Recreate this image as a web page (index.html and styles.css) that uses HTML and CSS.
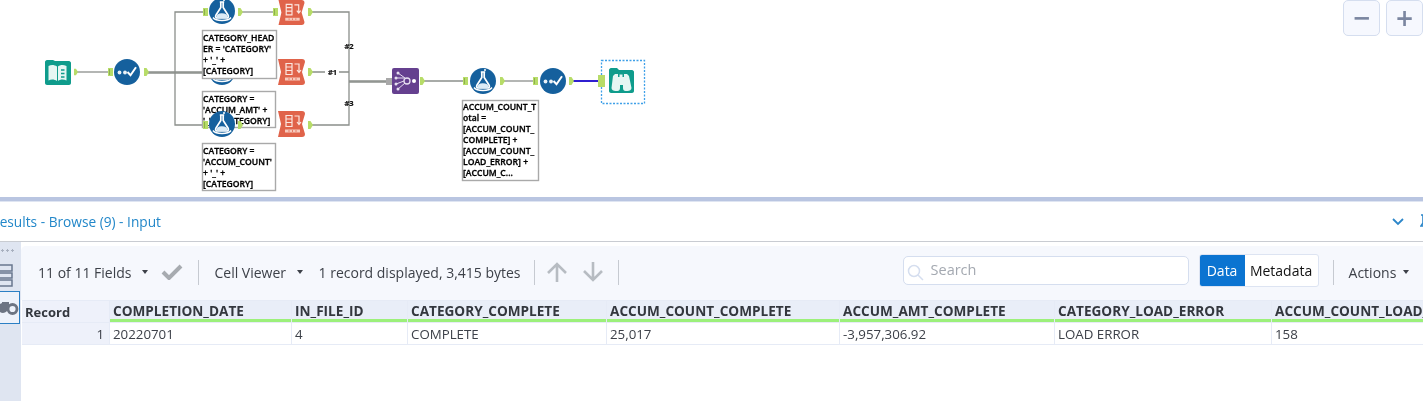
FILE: index.html
```html
<!DOCTYPE html>
<html lang="en">
<head>
<meta charset="utf-8">
<title>Results - Browse (9) - Input</title>
<link rel="stylesheet" href="styles.css">
</head>
<body>
<div class="app">
  <section class="canvas">
    <svg class="workflow" width="1423" height="197" viewBox="0 0 1423 197">
      <defs>
        <symbol id="flask" viewBox="0 0 26 26" overflow="visible">
          <circle cx="13" cy="13" r="13" fill="#15609d"/>
          <path d="M10.800 4h4.400M11.800 4.500v5L7 17c-1.100 1.800 0 3 1.800 3h8.400c1.800 0 2.900-1.200 1.800-3l-4.800-7.500v-5" fill="none" stroke="#fff" stroke-width="1.700"/>
          <path d="M8.400 16.500c2.500-1.600 6-1.600 9.200 0l1 2.200c-.2.800-.8 1.200-1.600 1.200H9c-.8 0-1.400-.4-1.600-1.200z" fill="#dcebf6"/>
          <path d="M4 19.500c3 4 15 4 18 0" fill="none" stroke="#fff" stroke-width="1.500"/>
          <circle cx="15" cy="2" r="1" fill="#fff"/>
        </symbol>
        <symbol id="select" viewBox="0 0 26 26" overflow="visible">
          <circle cx="13" cy="13" r="13" fill="#15609d"/>
          <circle cx="5.500" cy="13.500" r="1.900" fill="#eaf1f7"/>
          <circle cx="11" cy="13.500" r="1.900" fill="#eaf1f7"/>
          <path d="M13.500 13l3 3.200 5.500-8" fill="none" stroke="#fff" stroke-width="2"/>
        </symbol>
        <symbol id="split" viewBox="0 0 27 26">
          <path d="M0 0h24c2 0 3 1 3 3l-3 10 3 10c0 2-1 3-3 3H0l3-13z" fill="#e0634a"/>
          <path d="M8 4.500h6v11H8zM8 8h6M8 11.500h6" fill="none" stroke="#fbe6e0" stroke-width="1.200"/>
          <path d="M16.500 5h4.500v8M19 11l2 2.500 2-2.500" fill="none" stroke="#fbe6e0" stroke-width="1.200"/>
          <path d="M7 18.500h15v3H7z" fill="#f7cabd"/>
          <path d="M10.500 20h1M14 20h1M17.500 20h1" stroke="#e0634a" stroke-width="1.300"/>
        </symbol>
        <symbol id="anchor" viewBox="0 0 5 8">
          <path d="M0 0h2.500L5 4 2.500 8H0z" fill="#b7dc68"/>
        </symbol>
        <symbol id="inport" viewBox="0 0 5 8">
          <rect width="5" height="8" fill="#b7dc68"/>
          <rect x="1" y="1" width="1" height="6" fill="#8cb24c"/>
        </symbol>
      </defs>

      <g class="wire">
        <path d="M77 72H108"/>
        <path d="M148 72H203"/>
        <path d="M148 73H203"/>
        <path d="M203 12H175V125H203"/>
        <path d="M242 12H273"/>
        <path d="M312 12H349V125H312"/>
        <path d="M312 72H325M339 72H349"/>
        <path d="M349 81H390"/>
        <path d="M349 82H390"/>
        <path d="M424 81H463"/>
        <path d="M504 81H533"/>
      </g>
      <path class="wire-live" d="M573 81H600"/>

      <use href="#flask" x="209" y="59" width="26" height="26"/>

      <g class="book">
        <path d="M45 62c0-1 1-2 2-2h6l2 1h14c1 0 2 1 2 2v20c0 1-1 2-2 2H47c-1 0-2-1-2-2z" fill="#0f9c8c"/>
        <path d="M48.500 66c3-1.500 6-1 8.500 .5v14.500c-2.500-1.500-5.500-2-8.500-.5zM58 66.500c2-1.500 5-2 8.500-.5v14.500c-3.500-1.500-6.500-1-8.500 .5z" fill="#e6f6f3"/>
        <path d="M61 70h3.500M61 73.500h3.500M61 77h3.500" stroke="#0f9c8c" stroke-width="1.500"/>
      </g>
      <use href="#select" x="114" y="59" width="26" height="26"/>
      <use href="#flask" x="209" y="-2" width="26" height="26"/>
      <use href="#split" x="278" y="0" width="27" height="25"/>
      <use href="#split" x="278" y="59" width="27" height="26"/>
      <use href="#split" x="278" y="111" width="27" height="26"/>

      <g class="ports">
        <use href="#anchor" x="74" y="68" width="4" height="8"/>
        <use href="#inport" x="108" y="68" width="5" height="8"/>
        <use href="#anchor" x="144" y="68" width="5" height="8"/>
        <use href="#inport" x="203" y="8" width="5" height="8"/>
        <use href="#anchor" x="238" y="8" width="5" height="8"/>
        <use href="#inport" x="273" y="8" width="5" height="8"/>
        <use href="#anchor" x="308" y="8" width="5" height="8"/>
        <use href="#anchor" x="308" y="68" width="5" height="8"/>
        <use href="#anchor" x="308" y="121" width="5" height="8"/>
      </g>

      <g class="note">
        <rect class="note-box" x="202.500" y="30.500" width="74" height="48"/>
        <text x="203" y="41">CATEGORY_HEAD</text>
        <text x="203" y="52">ER = 'CATEGORY'</text>
        <text x="203" y="63">+ '_' +</text>
        <text x="203" y="74">[CATEGORY]</text>

        <rect class="note-box" x="202.500" y="91.500" width="73" height="36"/>
        <text x="203" y="102">CATEGORY =</text>
        <text x="203" y="113">'ACCUM_AMT' +</text>
        <text x="203" y="124">'_' + [CATEGORY]</text>
      </g>

      <use href="#flask" x="209" y="111" width="26" height="26"/>
      <use href="#inport" x="203" y="121" width="5" height="8"/>
      <use href="#anchor" x="238" y="121" width="5" height="8"/>

      <g class="note">
        <rect class="note-box" x="202.500" y="143.500" width="73" height="47"/>
        <text x="203" y="154">CATEGORY =</text>
        <text x="203" y="165">'ACCUM_COUNT'</text>
        <text x="203" y="176">+ '_' +</text>
        <text x="203" y="187">[CATEGORY]</text>

        <rect class="note-box" x="462.500" y="100.500" width="76" height="80"/>
        <text x="463" y="110">ACCUM_COUNT_T</text>
        <text x="463" y="121">otal =</text>
        <text x="463" y="132">[ACCUM_COUNT_</text>
        <text x="463" y="143">COMPLETE] +</text>
        <text x="463" y="154">[ACCUM_COUNT_</text>
        <text x="463" y="165">LOAD_ERROR] +</text>
        <text x="463" y="176">[ACCUM_C...</text>
      </g>

      <g class="conn-label">
        <text x="349" y="49">#2</text>
        <text x="328" y="75">#1</text>
        <text x="349" y="106">#3</text>
      </g>

      <g class="union">
        <rect x="392" y="68" width="27" height="26" rx="2" fill="#65408f"/>
        <circle cx="398" cy="73" r="1.500" fill="#e6def0"/>
        <circle cx="396" cy="78" r="1.500" fill="#e6def0"/>
        <circle cx="396" cy="84" r="1.500" fill="#e6def0"/>
        <circle cx="398" cy="89" r="1.500" fill="#e6def0"/>
        <path d="M398 73l7 5M396 78h8M396 84l8-3M398 89l7-6" stroke="#e6def0" fill="none"/>
        <circle cx="407" cy="81" r="3" fill="none" stroke="#e6def0" stroke-width="1.300"/>
        <circle cx="414" cy="81" r="2" fill="#fff"/>
      </g>
      <rect x="386" y="78" width="6" height="7" fill="#a9a9a9"/>
      <use href="#anchor" x="420" y="77" width="5" height="8"/>
      <use href="#flask" x="470" y="68" width="26" height="26"/>
      <use href="#inport" x="463" y="77" width="5" height="8"/>
      <use href="#anchor" x="500" y="77" width="5" height="8"/>
      <use href="#select" x="540" y="68" width="26" height="26"/>
      <use href="#inport" x="533" y="77" width="5" height="8"/>
      <use href="#anchor" x="569" y="77" width="5" height="8"/>

      <rect class="selection" x="601.500" y="60.500" width="43" height="43"/>
      <g class="browse">
        <path d="M609 70c0-1 1-2 2-2h6l2 2h13c1 0 2 1 2 2v19c0 1-1 2-2 2h-21c-1 0-2-1-2-2z" fill="#0f9c8c"/>
        <path d="M613 76l2-2h3v3h1.500v-2.500h3V77h1.500v-3h3l2 2 2.500 12c0 2-2 3-4 3h-2c-1.500 0-2.500-1-2.500-3v-3h-3v3c0 2-1 3-2.500 3h-2c-2 0-4-1-4-3z" fill="#e6f6f3"/>
      </g>
      <path d="M598 75h7v12h-7z" fill="#b7dc68"/>
    </svg>
    <div class="zoom">
      <button class="zoom-btn" type="button">&#8722;</button>
      <button class="zoom-btn" type="button">+</button>
    </div>
  </section>

  <div class="splitter"></div>

  <header class="title-bar">
    <span class="title">Results - Browse (9) - Input</span>
    <div class="title-icons">
      <svg width="14" height="10" viewBox="0 0 14 10"><path d="M2 2l5 5 5-5" fill="none" stroke="#2c86c9" stroke-width="1.800"/></svg>
      <svg class="pin" width="12" height="16" viewBox="0 0 12 16"><path d="M1 1h10M3 1v8L1 12h10L9 9V1M6 12v4" fill="none" stroke="#2c86c9" stroke-width="1.600"/></svg>
    </div>
  </header>

  <div class="results">
    <aside class="rail">
      <div class="grip"></div>
      <svg class="rail-list" width="13" height="24" viewBox="0 0 13 24">
        <path d="M-1 1h13v6H-1zM-1 9h13v5H-1zM-1 16h13v6H-1z" fill="none" stroke="#69778f" stroke-width="1.500"/>
      </svg>
      <div class="rail-active">
        <svg width="19" height="18" viewBox="0 0 19 18">
          <circle cx="3" cy="9" r="5" fill="#6d7482"/>
          <circle cx="12.500" cy="10" r="4.500" fill="none" stroke="#6d7482" stroke-width="2.800"/>
          <path d="M2 3h7v5H2z" fill="#6d7482"/>
        </svg>
      </div>
    </aside>

    <main class="panel">
      <div class="toolbar">
        <span class="tool-text">11 of 11 Fields</span>
        <span class="caret caret-fields"></span>
        <svg class="check" width="22" height="16" viewBox="0 0 22 16"><path d="M2 8l6 6L20 2" fill="none" stroke="#a7abb0" stroke-width="4"/></svg>
        <span class="sep sep-a"></span>
        <span class="tool-text">Cell Viewer</span>
        <span class="caret caret-cell"></span>
        <span class="tool-text record-count">1 record displayed, 3,415 bytes</span>
        <span class="sep sep-b"></span>
        <svg class="arrow" width="22" height="20" viewBox="0 0 22 20"><path d="M11 20V2M2 11l9-9 9 9" fill="none" stroke="#b7bcc2" stroke-width="2.600"/></svg>
        <svg class="arrow" width="22" height="20" viewBox="0 0 22 20"><path d="M11 0v18M2 9l9 9 9-9" fill="none" stroke="#b7bcc2" stroke-width="2.600"/></svg>
        <span class="sep sep-c"></span>
        <label class="search">
          <svg width="17" height="17" viewBox="0 0 17 17"><circle cx="7" cy="7" r="5.500" fill="none" stroke="#d5deef" stroke-width="1.500"/><path d="M11 11l5 5" stroke="#d5deef" stroke-width="1.500"/></svg>
          <span class="search-text">Search</span>
        </label>
        <div class="toggle">
          <span class="toggle-on">Data</span>
          <span class="toggle-off">Metadata</span>
        </div>
        <span class="sep sep-d"></span>
        <span class="tool-text">Actions</span>
        <span class="caret caret-actions"></span>
      </div>

      <div class="grid">
        <div class="cell head record">Record</div>
        <div class="cell head field">COMPLETION_DATE</div>
        <div class="cell head field">IN_FILE_ID</div>
        <div class="cell head field">CATEGORY_COMPLETE</div>
        <div class="cell head field">ACCUM_COUNT_COMPLETE</div>
        <div class="cell head field">ACCUM_AMT_COMPLETE</div>
        <div class="cell head field">CATEGORY_LOAD_ERROR</div>
        <div class="cell head field">ACCUM_COUNT_LOAD_ERROR</div>

        <div class="cell row-num">1</div>
        <div class="cell">20220701</div>
        <div class="cell">4</div>
        <div class="cell">COMPLETE</div>
        <div class="cell">25,017</div>
        <div class="cell">-3,957,306.92</div>
        <div class="cell">LOAD ERROR</div>
        <div class="cell">158</div>
      </div>
    </main>
  </div>
</div>
</body>
</html>
```

FILE: styles.css
```css
* { box-sizing: border-box; }

html, body {
  margin: 0;
  width: 1423px;
  height: 401px;
  overflow: hidden;
  background: #fff;
}

body {
  font-family: "Open Sans", "Noto Sans", sans-serif;
  font-size: 14px;
  color: #3d4149;
}

.app {
  display: flex;
  flex-direction: column;
  width: 1423px;
  height: 401px;
  overflow: hidden;
  filter: blur(0.45px);
}

/* canvas */
.canvas {
  position: relative;
  flex: 0 0 197px;
  background: #fff;
}

.workflow { display: block; }

.wire path { fill: none; stroke: #8b8f8b; stroke-width: 1.300; }
.wire-live { fill: none; stroke: #2f1fd0; stroke-width: 2; }

.note-box { fill: #fff; stroke: #a9a9a9; stroke-width: 1.400; }
.note text {
  font-family: "Open Sans", sans-serif;
  font-size: 8.600px;
  font-weight: 600;
  fill: #000;
  stroke: #000;
  stroke-width: 0.3px;
}
.conn-label text {
  font-family: "Open Sans", sans-serif;
  font-size: 7.500px;
  font-weight: 700;
  fill: #111;
  stroke: #111;
  stroke-width: 0.2px;
  text-anchor: middle;
}
.conn-label text:nth-child(2) { text-anchor: start; }

.selection {
  fill: none;
  stroke: #3fa0e8;
  stroke-width: 1.300;
  stroke-dasharray: 2 1.500;
}

.zoom {
  position: absolute;
  top: 0;
  right: 0;
  display: flex;
  gap: 6px;
}

.zoom-btn {
  width: 37px;
  height: 36px;
  padding: 0;
  background: #f6f8fe;
  border: 1px solid #d5deef;
  border-radius: 5px;
  font-family: "Open Sans", sans-serif;
  font-size: 30px;
  font-weight: 600;
  line-height: 30px;
  color: #7b86a0;
}

/* splitter + title */
.splitter {
  flex: 0 0 5px;
  background: #b9c5e1;
  border-bottom: 1px solid #dfe5f2;
}

.title-bar {
  flex: 0 0 40px;
  display: flex;
  align-items: center;
  justify-content: space-between;
  background: #fff;
  border-bottom: 1px solid #c9ccd2;
  overflow: hidden;
}

.title {
  margin-left: -8.800px;
  color: #2287c9;
  font-size: 13.700px;
}

.title-icons {
  display: flex;
  align-items: center;
  gap: 15px;
  margin-right: -9px;
}

/* results */
.results {
  flex: 1;
  display: flex;
  min-height: 0;
}

.rail {
  flex: 0 0 21px;
  background: #dfe5f1;
  display: flex;
  flex-direction: column;
}

.grip {
  height: 3px;
  margin: 7px 5px 0 0;
  background: radial-gradient(circle, #a8b0bf 1px, transparent 1.200px) 0 0 / 5px 3px repeat-x;
}

.rail-list { margin-top: 12px; display: block; }

.rail-active {
  margin-top: 3px;
  height: 33px;
  width: 20px;
  background: #eef2fa;
  border: 1px solid #2b7fc4;
  border-left: 0;
  display: flex;
  align-items: center;
  overflow: hidden;
}

.panel {
  flex: 1;
  min-width: 0;
  display: flex;
  flex-direction: column;
  background: #fff;
  padding-top: 4px;
  overflow: hidden;
}

.toolbar {
  flex: 0 0 54px;
  display: flex;
  align-items: center;
  padding-left: 17px;
  padding-bottom: 2px;
  background: #f6f8fd;
  border-top-left-radius: 5px;
  white-space: nowrap;
}

.tool-text { color: #3d4149; }
.record-count { margin-left: 0.500px; }

.caret {
  width: 0;
  height: 0;
  border-left: 3.500px solid transparent;
  border-right: 3.500px solid transparent;
  border-top: 4px solid #3d4149;
}
.caret-fields { margin-left: 11px; }
.check { margin-left: 13px; }

.sep {
  width: 1px;
  height: 25px;
  background: #c6cad1;
}
.sep-a { margin: 0 15px; }
.caret-cell { margin-left: 11px; margin-right: 15px; }
.sep-b { margin-left: 13px; margin-right: 11px; }
.arrow + .arrow { margin-left: 14px; }
.sep-c { margin-left: 14px; }

.search {
  margin-left: 284px;
  margin-bottom: 4px;
  width: 286px;
  height: 29px;
  display: flex;
  align-items: center;
  gap: 7px;
  padding: 2px 0 0 3px;
  background: #fff;
  border: 1px solid #d5deef;
  border-radius: 5px;
}
.search svg { margin-top: 3px; }
.search-text { color: #a4a9b1; margin-top: -3px; font-size: 14.500px; }

.toggle {
  margin-left: 10px;
  margin-bottom: 4px;
  height: 33px;
  display: flex;
  background: #fff;
  border: 1px solid #dde4f2;
  border-radius: 3px;
  overflow: hidden;
}
.toggle-on {
  width: 45px;
  background: #0b74d1;
  color: #fff;
  display: flex;
  align-items: center;
  justify-content: center;
}
.toggle-off {
  width: 73px;
  color: #111;
  display: flex;
  align-items: center;
  justify-content: center;
}

.sep-d { margin-left: 14px; margin-right: 15px; }
.caret-actions { margin-left: 7px; }

/* data grid */
.grid {
  display: grid;
  grid-template-columns: 87px 181px 115px 198px 232px 214px 216px 180px;
  grid-template-rows: 21px 21px;
  gap: 1px;
  margin-left: 1px;
  width: 1450px;
  background: #e6ebf6;
  padding: 0 0 1px;
  border-top: 1px solid #e6ebf6;
}

.cell {
  display: flex;
  align-items: center;
  padding: 1px 0 0 3px;
  background: #fff;
  font-size: 13.300px;
  color: #3d4149;
  white-space: nowrap;
  overflow: hidden;
}

.head {
  padding-top: 0;
  background: #e9eef8;
  font-weight: 700;
  color: #33373e;
  font-size: 13.600px;
}

.field { border-bottom: 3px solid #9cf07a; }
.record { background: #eef1fa; font-size: 13px; }
.row-num { justify-content: flex-end; padding-right: 5px; background: #eef1fa; }
```
